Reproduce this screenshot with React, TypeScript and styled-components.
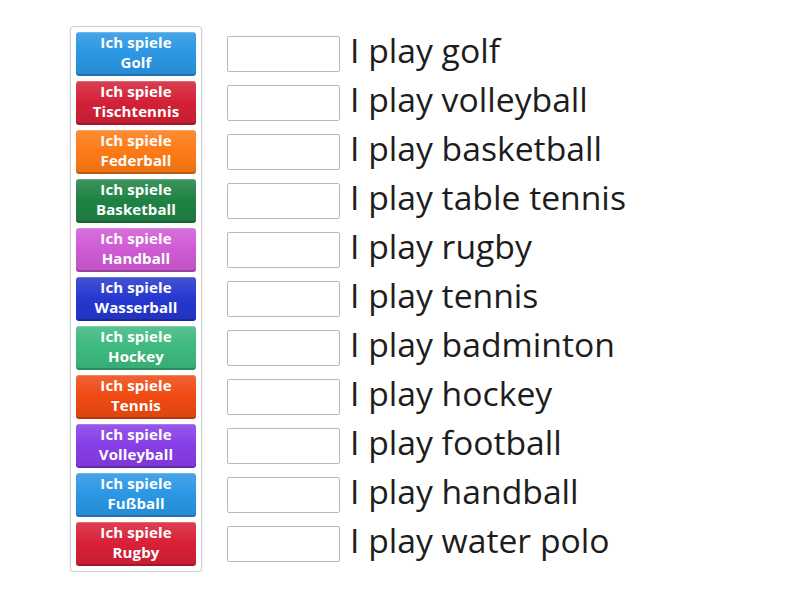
import React from "react";
import styled, { createGlobalStyle } from "styled-components";

const GlobalStyle = createGlobalStyle`
  html, body {
    margin: 0;
    padding: 0;
    background: #ffffff;
    font-family: "Open Sans", "Liberation Sans", sans-serif;
  }
`;

type TileType = {
  name: string;
  color: string;
};

const TILES: TileType[] = [
  { name: "Golf", color: "#2a96e4" },
  { name: "Tischtennis", color: "#d32036" },
  { name: "Federball", color: "#fd7a15" },
  { name: "Basketball", color: "#1e8243" },
  { name: "Handball", color: "#cf5ad4" },
  { name: "Wasserball", color: "#2537cf" },
  { name: "Hockey", color: "#3db97f" },
  { name: "Tennis", color: "#ef4a12" },
  { name: "Volleyball", color: "#873de6" },
  { name: "Fußball", color: "#2a96e4" },
  { name: "Rugby", color: "#d82036" },
];

const ANSWERS = [
  "I play golf",
  "I play volleyball",
  "I play basketball",
  "I play table tennis",
  "I play rugby",
  "I play tennis",
  "I play badminton",
  "I play hockey",
  "I play football",
  "I play handball",
  "I play water polo",
];

const Page = styled.div`
  display: flex;
  align-items: flex-start;
  gap: 25px;
  padding: 26px 0 0 70px;
`;

const TileBox = styled.div`
  display: flex;
  flex-direction: column;
  gap: 5px;
  padding: 5px;
  border: 1px solid #cfcfcf;
  border-radius: 4px;
  box-shadow: 0 1px 2px rgba(0, 0, 0, 0.12);
`;

const Tile = styled.div<{ color: string }>`
  width: 120px;
  height: 44px;
  box-sizing: border-box;
  display: flex;
  align-items: center;
  justify-content: center;
  border-radius: 3px;
  background: ${({ color }) => color};
  background-image: linear-gradient(
    to bottom,
    rgba(255, 255, 255, 0.14),
    rgba(255, 255, 255, 0) 50%,
    rgba(0, 0, 0, 0.08)
  );
  box-shadow: inset 0 -2px 0 rgba(0, 0, 0, 0.2),
    inset 0 1px 0 rgba(255, 255, 255, 0.2);
  padding-bottom: 5px;
`;

const TileLabel = styled.p`
  margin: 0;
  color: #ffffff;
  font-size: 15px;
  font-weight: 700;
  line-height: 20px;
  letter-spacing: 0.1px;
  text-align: center;
`;

const AnswerList = styled.div`
  display: flex;
  flex-direction: column;
  gap: 5px;
  padding-top: 6px;
`;

const AnswerRow = styled.div`
  display: flex;
  align-items: center;
  gap: 10px;
  height: 44px;
`;

const DropBox = styled.div`
  width: 113px;
  height: 36px;
  box-sizing: border-box;
  border: 1px solid #b9b9b9;
  border-radius: 2px;
  background: #ffffff;
`;

const AnswerText = styled.div`
  font-size: 33.7px;
  line-height: 44px;
  color: #1d1d1d;
  white-space: nowrap;
  margin-top: -8px;
`;

export default function App() {
  return (
    <>
      <GlobalStyle />
      <Page>
        <TileBox>
          {TILES.map((tile) => (
            <Tile key={tile.name} color={tile.color}>
              <TileLabel>
                Ich spiele
                <br />
                {tile.name}
              </TileLabel>
            </Tile>
          ))}
        </TileBox>
        <AnswerList>
          {ANSWERS.map((answer) => (
            <AnswerRow key={answer}>
              <DropBox />
              <AnswerText>{answer}</AnswerText>
            </AnswerRow>
          ))}
        </AnswerList>
      </Page>
    </>
  );
}
